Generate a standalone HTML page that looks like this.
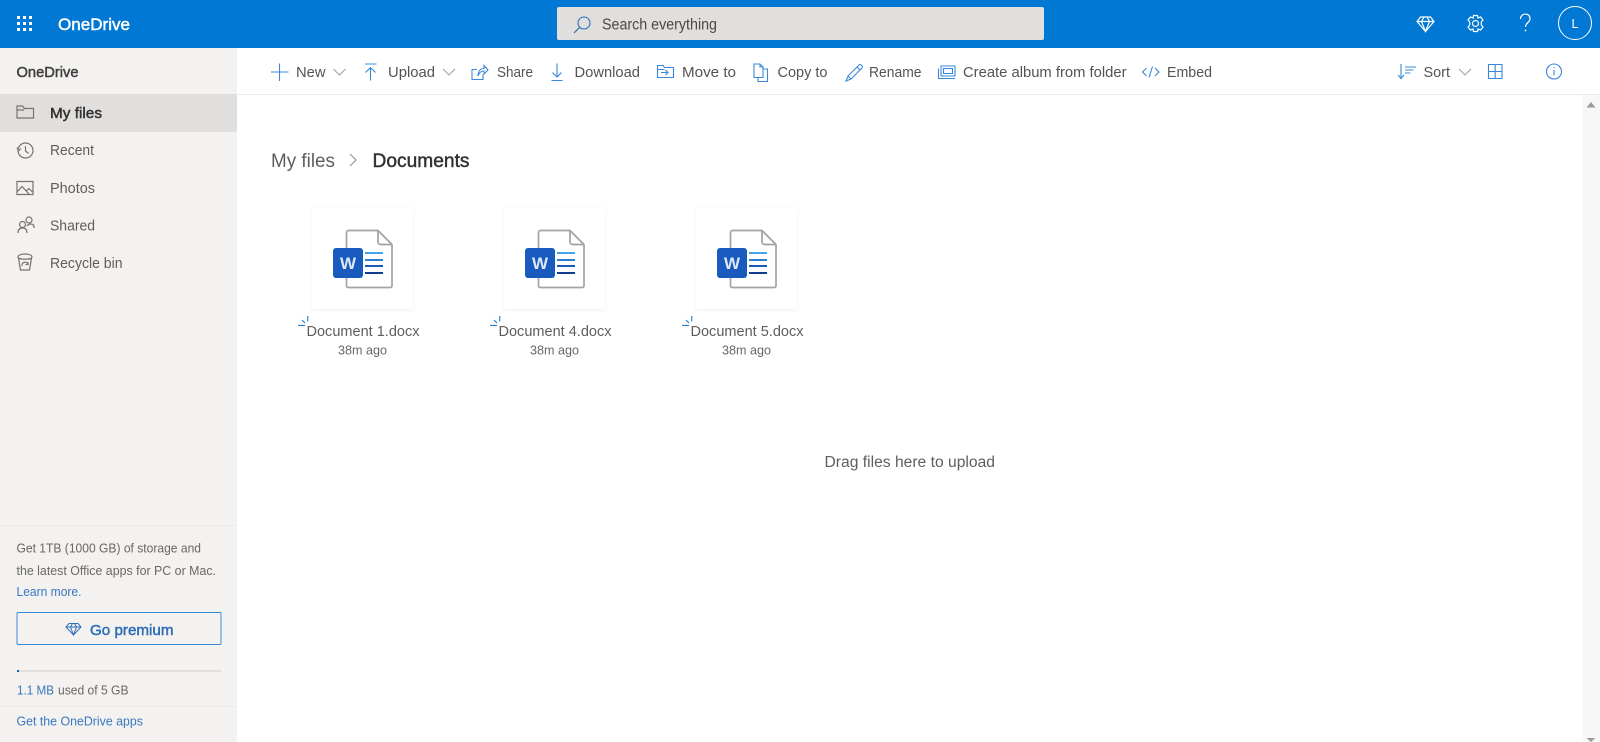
<!DOCTYPE html>
<html lang="en"><head><meta charset="utf-8"><title>OneDrive</title>
<style>
html,body{margin:0;padding:0;width:1600px;height:742px;overflow:hidden;background:#fff}
svg{display:block;position:absolute;left:0;top:0;filter:blur(.35px)}
text{font-family:"Liberation Sans",Arial,sans-serif}
.c{font-size:15px;fill:#55534f}
.n{font-size:15px;fill:#605e5c}
.s{font-size:12.5px;fill:#6a6866}
.l{font-size:12.5px;fill:#3a78bd}
.sb{stroke-width:.45px;paint-order:stroke}
.i{fill:none;stroke:#3a88da;stroke-width:1.1}
.g{fill:none;stroke:#757371;stroke-width:1.2}
.w{fill:none;stroke:#fff;stroke-width:1.2}
</style></head><body>
<svg width="1600" height="742" viewBox="0 0 1600 742" xmlns="http://www.w3.org/2000/svg">
<defs>
<filter id="sh" x="-10%" y="-10%" width="120%" height="120%"><feDropShadow dx="0" dy="1" stdDeviation="2" flood-color="#000" flood-opacity="0.06"/></filter>
<g id="doc">
  <rect x="0" y="0" width="101" height="101" fill="#fff" filter="url(#sh)"/>
  <path d="M36.500 22.500H66L80 36.500V78a1.500 1.500 0 0 1-1.500 1.500H36a1.500 1.500 0 0 1-1.500-1.500V24.500a2 2 0 0 1 2-2Z" fill="#fff" stroke="#a3a3a3" stroke-width="1.700" stroke-linejoin="round"/>
  <path d="M66 22.500V34a2.500 2.500 0 0 0 2.500 2.500H80" fill="none" stroke="#a3a3a3" stroke-width="1.700"/>
  <rect x="21" y="40" width="30" height="30" rx="3" fill="#185abd"/>
  <text x="36" y="61" font-size="17" font-weight="700" fill="#dfe8f6" text-anchor="middle">W</text>
  <rect x="53" y="44" width="18" height="2" fill="#41a5ee"/>
  <rect x="53" y="51" width="18" height="2" fill="#2b7cd3"/>
  <rect x="53" y="57" width="18" height="2" fill="#185abd"/>
  <rect x="53" y="64" width="18" height="2" fill="#103f91"/>
</g>
<g id="spin" fill="none" stroke="#2f80d6" stroke-width="1.200">
  <path d="M298 325.500H305"/><path d="M302 320L305 323"/><path d="M307.700 316V321.500"/>
</g>
</defs>

<!-- page regions -->
<rect x="0" y="0" width="1600" height="742" fill="#fff"/>
<rect x="0" y="48" width="237" height="694" fill="#f3f2f1"/>
<rect x="1582.500" y="95" width="17.500" height="647" fill="#f7f7f7"/>
<path d="M1586.500 107.500L1591 102L1595.500 107.500Z" fill="#9a9a9a"/>
<path d="M1586.500 738L1591 742L1595.500 738Z" fill="#9a9a9a"/>
<rect x="237" y="94" width="1363" height="1" fill="#edebe9"/>

<!-- top bar -->
<rect x="0" y="0" width="1600" height="48" fill="#0078d4"/>
<g fill="#fff">
  <rect x="17" y="16" width="3" height="3"/><rect x="23" y="16" width="3" height="3"/><rect x="29" y="16" width="3" height="3"/>
  <rect x="17" y="22" width="3" height="3"/><rect x="23" y="22" width="3" height="3"/><rect x="29" y="22" width="3" height="3"/>
  <rect x="17" y="28" width="3" height="3"/><rect x="23" y="28" width="3" height="3"/><rect x="29" y="28" width="3" height="3"/>
</g>
<text class="sb" x="58" y="30" font-size="16.500" stroke="#fff" fill="#fff" textLength="72" lengthAdjust="spacingAndGlyphs">OneDrive</text>
<rect x="557" y="7" width="487" height="33" rx="2" fill="#e1dfdd"/>
<circle cx="584" cy="23" r="6" fill="none" stroke="#2a6fb8" stroke-width="1.100"/>
<path d="M579.500 27.500L574 33" fill="none" stroke="#2a6fb8" stroke-width="1.200"/>
<text x="602" y="29.500" font-size="15.500" fill="#4a4947" textLength="115" lengthAdjust="spacingAndGlyphs">Search everything</text>

<path class="w" d="M1420.500 17H1430.500L1434 21.500L1425.500 31.500L1417 21.500Z M1417 21.500H1434 M1421.500 21.500L1425.500 31.500L1429.500 21.500 M1421.500 21.500L1424 17 M1429.500 21.500L1427 17" stroke-width="1.500"/>
<g transform="translate(1475.500 23.500)">
  <circle r="3" class="w"/>
  <path class="w" d="M-2 -8H2L2.500 -5.500L5 -6.500L7.500 -3.500L5.800 -1.500V1.500L7.500 3.500L5 6.500L2.500 5.500L2 8H-2L-2.500 5.500L-5 6.500L-7.500 3.500L-5.800 1.500V-1.500L-7.500 -3.500L-5 -6.500L-2.500 -5.500Z"/>
</g>
<path class="w" d="M1520.500 19c0-6.500 9.500-6.500 9.500-.5c0 4.500-4.500 4-4.500 8.500" stroke-width="1.100"/>
<circle cx="1525.500" cy="30.500" r=".9" fill="#fff"/>
<circle cx="1575" cy="23" r="16.500" fill="none" stroke="#fff" stroke-width="1"/>
<text x="1575" y="28" font-size="12.500" fill="#fff" text-anchor="middle">L</text>

<!-- command bar -->
<g class="i">
  <path d="M271 72H288.500M279.500 63.500V81"/>
  <path d="M365 64H376.500M370.500 80.500V68M365.500 72.500L370.500 67.500L375.500 72.500"/>
  <path d="M483 74.500V79.500H472V69.500H477M478 76c0-5 2.500-7.500 6-7.500V65.500L488 70L484 74V71c-3 0-4.800 1.500-6 5Z"/>
  <path d="M557 63.500V76.500M552.500 72.500L557 77L561.500 72.500M551.500 80.500H562.500"/>
  <path d="M657.500 65.500H663L664.500 67.500H673.500V77.500H657.500ZM657.500 69.500H664.500M661 72.500H668M665.500 70L668 72.500L665.500 75"/>
  <path d="M754 64H760L763 67V77.500H754ZM763 69H767.500V81.500H758V77.500M760 64V67H763"/>
  <path d="M846 81L848 76L859 65C860.500 63.500 863.500 66.500 862 68L851 79ZM848 76L851 79M857 67L860 70"/>
  <path d="M941 66H955V76H941ZM943.500 68.500H952.500V73.500H943.500ZM938.500 68.500V78.500H955"/>
  <path d="M1146.500 68L1142.500 72L1146.500 76M1155 68L1159 72L1155 76M1152.500 66.500L1149 77.500"/>
  <path d="M1401 64V78M1398 75L1401 78.500L1404 75"/><path d="M1405 67H1416M1405 70H1413.500M1405 73H1410.500"/>
  <path d="M1488.500 64.500H1502V78.500H1488.500ZM1495.200 64.500V78.500M1488.500 71.500H1502"/>
  <circle cx="1554" cy="71.500" r="7.500"/><path d="M1554 70V75.500M1554 67V68.300"/>
</g>
<g fill="none" stroke="#a19f9d" stroke-width="1">
  <path d="M333.500 69L339.500 75L345.500 69"/>
  <path d="M443 69L449 75L455 69"/>
  <path d="M1459 69L1465 75L1471 69"/>
</g>
<g class="c">
<text x="296" y="77" textLength="29.500" lengthAdjust="spacingAndGlyphs">New</text>
<text x="388" y="77" textLength="47" lengthAdjust="spacingAndGlyphs">Upload</text>
<text x="497" y="77" textLength="36" lengthAdjust="spacingAndGlyphs">Share</text>
<text x="574.500" y="77" textLength="65.500" lengthAdjust="spacingAndGlyphs">Download</text>
<text x="682" y="77" textLength="54" lengthAdjust="spacingAndGlyphs">Move to</text>
<text x="777.500" y="77" textLength="50" lengthAdjust="spacingAndGlyphs">Copy to</text>
<text x="869" y="77" textLength="52.500" lengthAdjust="spacingAndGlyphs">Rename</text>
<text x="963" y="77" textLength="163.500" lengthAdjust="spacingAndGlyphs">Create album from folder</text>
<text x="1167" y="77" textLength="45" lengthAdjust="spacingAndGlyphs">Embed</text>
<text x="1423.500" y="77" textLength="26.500" lengthAdjust="spacingAndGlyphs">Sort</text>
</g>

<!-- sidebar -->
<text class="sb" x="16.500" y="77" font-size="14.500" stroke="#3f3e3d" fill="#3f3e3d" textLength="62" lengthAdjust="spacingAndGlyphs">OneDrive</text>
<rect x="0" y="94" width="237" height="38" fill="#e1dfdd"/>
<g class="g">
  <path d="M17 106V118H33.500V108.500H24.500L22.500 106Z M17 110H24"/>
  <circle cx="25.500" cy="150.500" r="7.500"/><path d="M25.500 146V151L28.500 153.500M17 147.500L18.500 151L21 148.500"/>
  <path d="M17 181.500H33V194.500H17ZM17.500 191.500L22 186.500L29 194M26 191L29 188.500L32.500 192"/>
  <circle cx="29" cy="220" r="3"/><circle cx="22.500" cy="224.500" r="3"/><path d="M18 233C18 229 20 228 22.500 228C25 228 27 229 27 233M27 226C28 224.500 29.500 224 31 224C33 224 34.500 225.500 34 228"/>
  <path d="M18 257C18 253 32 253 32 257C32 260 18 260 18 257ZM18.500 258L20.500 270H29.500L31.500 258M22 266C21 262 27 261 28 264M28 262V264.500H25.500"/>
</g>
<text class="sb" x="50" y="118" font-size="15" stroke="#323130" fill="#323130" textLength="52" lengthAdjust="spacingAndGlyphs">My files</text>
<text class="n" x="50" y="155" textLength="44" lengthAdjust="spacingAndGlyphs">Recent</text>
<text class="n" x="50" y="193" textLength="45" lengthAdjust="spacingAndGlyphs">Photos</text>
<text class="n" x="50" y="230.500" textLength="45" lengthAdjust="spacingAndGlyphs">Shared</text>
<text class="n" x="50" y="268" textLength="72.500" lengthAdjust="spacingAndGlyphs">Recycle bin</text>

<rect x="0" y="525" width="237" height="1" fill="#ebe9e7"/>
<text class="s" x="16.500" y="552.500" textLength="184.500" lengthAdjust="spacingAndGlyphs">Get 1TB (1000 GB) of storage and</text>
<text class="s" x="16.500" y="575" textLength="199.500" lengthAdjust="spacingAndGlyphs">the latest Office apps for PC or Mac.</text>
<text class="l" x="16.500" y="596" textLength="65" lengthAdjust="spacingAndGlyphs">Learn more.</text>
<rect x="17" y="612.500" width="204" height="32" rx="1" fill="none" stroke="#3b8ad6" stroke-width="1"/>
<path d="M69 623.500H78L81 627L73.500 635L66 627Z M66 627H81 M70.500 627L73.500 635L76.500 627 M70.500 627L72.500 623.500 M76.500 627L74.500 623.500" fill="none" stroke="#2f6fb5" stroke-width="1"/>
<text class="sb" x="90" y="635" font-size="15" stroke="#2b6cb5" fill="#2b6cb5" textLength="83.500" lengthAdjust="spacingAndGlyphs">Go premium</text>
<rect x="17" y="670" width="204" height="2" fill="#e1dfdd"/>
<rect x="17" y="670" width="2" height="2" fill="#0f5fb5"/>
<text class="l" x="17" y="694.500" textLength="37" lengthAdjust="spacingAndGlyphs">1.1 MB</text>
<text class="s" x="58" y="694.500" textLength="70.500" lengthAdjust="spacingAndGlyphs">used of 5 GB</text>
<rect x="0" y="706" width="237" height="1" fill="#ebe9e7"/>
<text class="l" x="16.500" y="725.500" textLength="126.500" lengthAdjust="spacingAndGlyphs">Get the OneDrive apps</text>

<!-- breadcrumb -->
<text x="271" y="167" font-size="19" fill="#605e5c" textLength="64" lengthAdjust="spacingAndGlyphs">My files</text>
<path d="M350 154L356 160L350 166" fill="none" stroke="#8a8886" stroke-width="1"/>
<text class="sb" x="372.500" y="167" font-size="19" stroke="#323130" fill="#323130" textLength="97" lengthAdjust="spacingAndGlyphs">Documents</text>

<!-- tiles -->
<use href="#doc" x="312" y="208"/>
<use href="#doc" x="504" y="208"/>
<use href="#doc" x="696" y="208"/>
<use href="#spin"/>
<use href="#spin" x="192"/>
<use href="#spin" x="384"/>
<g font-size="15" fill="#605e5c">
<text x="306.500" y="336" textLength="113" lengthAdjust="spacingAndGlyphs">Document 1.docx</text>
<text x="498.500" y="336" textLength="113" lengthAdjust="spacingAndGlyphs">Document 4.docx</text>
<text x="690.500" y="336" textLength="113" lengthAdjust="spacingAndGlyphs">Document 5.docx</text>
</g>
<g font-size="12.500" fill="#6a6866">
<text x="338" y="354.500" textLength="49" lengthAdjust="spacingAndGlyphs">38m ago</text>
<text x="530" y="354.500" textLength="49" lengthAdjust="spacingAndGlyphs">38m ago</text>
<text x="722" y="354.500" textLength="49" lengthAdjust="spacingAndGlyphs">38m ago</text>
</g>
<text x="824.500" y="467" font-size="15.500" fill="#605e5c" textLength="170.500" lengthAdjust="spacingAndGlyphs">Drag files here to upload</text>
</svg>
</body></html>
